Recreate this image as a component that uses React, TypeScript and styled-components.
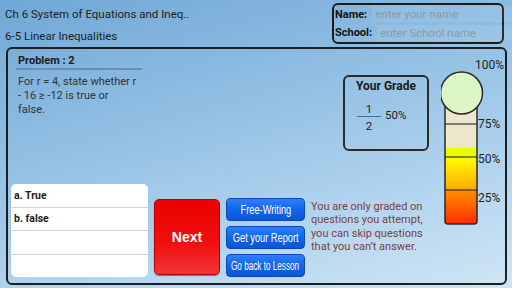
import React from "react";
import styled, { createGlobalStyle } from "styled-components";

const GlobalStyle = createGlobalStyle`
  html, body {
    margin: 0;
    padding: 0;
  }
  body {
    width: 512px;
    height: 288px;
    overflow: hidden;
    font-family: Roboto, "Liberation Sans", sans-serif;
  }
`;

const answers = ["a. True", "b. false", "", ""];
const actions = [
  { label: "Free-Writing", squeeze: 0.77 },
  { label: "Get your Report", squeeze: 0.77 },
  { label: "Go back to Lesson", squeeze: 0.68 },
];

const Thermometer = () => (
  <svg width="64" height="180" viewBox="0 0 64 180">
    <defs>
      <linearGradient id="mid" x1="0" y1="0" x2="0" y2="1">
        <stop offset="0" stopColor="#ffff00" />
        <stop offset="1" stopColor="#ffa800" />
      </linearGradient>
      <linearGradient id="low" x1="0" y1="0" x2="0" y2="1">
        <stop offset="0" stopColor="#ff9000" />
        <stop offset="1" stopColor="#ff2e00" />
      </linearGradient>
    </defs>
    <rect x="4" y="50" width="32" height="49" fill="#ede6ca" />
    <rect x="4" y="99" width="32" height="9" fill="#e8ff00" />
    <rect x="4" y="108" width="32" height="33" fill="url(#mid)" />
    <path d="M4 141 H36 V172 Q36 175 33 175 H7 Q4 175 4 172 Z" fill="url(#low)" />
    <line x1="4" y1="75" x2="36" y2="75" stroke="#333" strokeWidth="1.2" />
    <line x1="4" y1="108" x2="36" y2="108" stroke="#333" strokeWidth="1.2" />
    <line x1="4" y1="141" x2="36" y2="141" stroke="#333" strokeWidth="1.2" />
    <path d="M4 56 V172 Q4 175 7 175 H33 Q36 175 36 172 V56" fill="none" stroke="#2a2a2a" strokeWidth="1.5" />
    <circle cx="20.5" cy="44" r="21" fill="#dcf6c6" stroke="#2a2a2a" strokeWidth="1.5" />
    <g fontFamily="Roboto, sans-serif" fontSize="12" fill="#222">
      <text x="34" y="20">100%</text>
      <text x="37" y="79">75%</text>
      <text x="37" y="114">50%</text>
      <text x="37" y="153">25%</text>
    </g>
  </svg>
);

const App = () => {
  return (
    <Screen>
      <GlobalStyle />
      <Header>
        <Titles>
          <Title>Ch 6 System of Equations and Ineq..</Title>
          <Title>6-5 Linear Inequalities</Title>
        </Titles>
        <NameCard>
          <Field>
            <FieldLabel>Name:</FieldLabel>
            <FieldInput placeholder="enter your name" />
          </Field>
          <Field>
            <FieldLabel>School:</FieldLabel>
            <FieldInput placeholder="enter School name" />
          </Field>
        </NameCard>
      </Header>

      <Panel>
        <Main>
          <TopRow>
            <Problem>
              <ProblemLabel>Problem : 2</ProblemLabel>
              <Rule />
              <ProblemText>
                For r = 4, state whether r
                <br />- 16 ≥ -12 is true or
                <br />
                false.
              </ProblemText>
            </Problem>
            <GradeCard>
              <GradeTitle>Your Grade</GradeTitle>
              <GradeRow>
                <Fraction>
                  <Num>1</Num>
                  <Den>2</Den>
                </Fraction>
                <Percent>50%</Percent>
              </GradeRow>
            </GradeCard>
          </TopRow>

          <BottomRow>
            <AnswerList>
              {answers.map((a, i) => (
                <AnswerRow key={i} last={i === answers.length - 1}>
                  {a}
                </AnswerRow>
              ))}
            </AnswerList>
            <NextButton>Next</NextButton>
            <ButtonStack>
              {actions.map((a) => (
                <BlueButton key={a.label}>
                  <ButtonText squeeze={a.squeeze}>{a.label}</ButtonText>
                </BlueButton>
              ))}
            </ButtonStack>
            <Note>
              You are only graded on
              <br />
              questions you attempt,
              <br />
              you can skip questions
              <br />
              that you can’t answer.
            </Note>
          </BottomRow>
        </Main>
        <ThermoColumn>
          <Thermometer />
        </ThermoColumn>
      </Panel>
    </Screen>
  );
};

export default App;

const Screen = styled.div`
  width: 512px;
  height: 288px;
  display: flex;
  flex-direction: column;
  background: linear-gradient(165deg, #70a7d6 0%, #93c0e4 40%, #b6d7ef 75%, #cfe5f4 100%);
  color: #222;
  overflow: hidden;
`;

const Header = styled.div`
  height: 47px;
  display: flex;
  justify-content: space-between;
  flex-shrink: 0;
`;

const Titles = styled.div`
  padding: 3px 0 0 5px;
`;

const Title = styled.div`
  font-size: 11.5px;
  line-height: 22px;
  color: #1e1e1e;
`;

const NameCard = styled.div`
  margin: 3px 8px 0 0;
  width: 172px;
  height: 41px;
  box-sizing: border-box;
  border: 2px solid #1c1c1c;
  border-radius: 6px;
  padding: 0 4px 0 1px;
  display: grid;
  grid-template-rows: 1fr 1fr;
`;

const Field = styled.div`
  display: flex;
  align-items: center;
  gap: 5px;
`;

const FieldLabel = styled.span`
  font-size: 11px;
  font-weight: bold;
  color: #111;
`;

const FieldInput = styled.input`
  flex: 1;
  min-width: 0;
  height: 16px;
  border: none;
  outline: none;
  padding: 0 3px;
  background: rgba(255, 255, 255, 0.08);
  font-family: Roboto, sans-serif;
  font-size: 11.5px;
  color: #333;

  &::placeholder {
    color: #8a9aa8;
  }
`;

const Panel = styled.div`
  flex: 1;
  margin: 0 5px 3px 6px;
  border: 2px solid #1e1e1e;
  border-radius: 6px;
  display: flex;
`;

const Main = styled.div`
  width: 433px;
  display: flex;
  flex-direction: column;
`;

const TopRow = styled.div`
  height: 135px;
  display: flex;
  justify-content: space-between;
  flex-shrink: 0;
`;

const Problem = styled.div`
  width: 126px;
  margin-left: 8px;
  padding-top: 5px;
`;

const ProblemLabel = styled.div`
  font-size: 11px;
  font-weight: bold;
  line-height: 14px;
  padding-left: 2px;
  color: #1a1a1a;
`;

const Rule = styled.div`
  height: 2px;
  background: #6a8db6;
`;

const ProblemText = styled.div`
  margin-top: 5px;
  padding-left: 2px;
  font-size: 11px;
  line-height: 14px;
  color: #333;
`;

const GradeCard = styled.div`
  margin: 26px 12px 0 0;
  width: 86px;
  height: 76px;
  box-sizing: border-box;
  border: 2px solid #2a2a2a;
  border-radius: 6px;
  display: flex;
  flex-direction: column;
`;

const GradeTitle = styled.div`
  padding-top: 1px;
  font-size: 12px;
  font-weight: bold;
  line-height: 16px;
  text-align: center;
  color: #1a1a1a;
`;

const GradeRow = styled.div`
  margin-top: 8px;
  padding-left: 12px;
  display: flex;
  align-items: center;
  gap: 4px;
`;

const Fraction = styled.div`
  width: 24px;
  display: flex;
  flex-direction: column;
  align-items: center;
  font-size: 11.5px;
`;

const Num = styled.div`
  width: 100%;
  text-align: center;
  line-height: 14px;
  border-bottom: 1.5px solid #3d6ea6;
`;

const Den = styled.div`
  margin-top: 2px;
  line-height: 14px;
`;

const Percent = styled.div`
  margin-bottom: 5px;
  font-size: 11.5px;
`;

const BottomRow = styled.div`
  flex: 1;
  display: flex;
  align-items: flex-end;
  gap: 6px;
  padding: 0 0 6px 3px;
`;

const AnswerList = styled.div`
  width: 137px;
  height: 93px;
  background: #fff;
  border-radius: 5px;
  display: flex;
  flex-direction: column;
  overflow: hidden;
`;

const AnswerRow = styled.div<{ last?: boolean }>`
  flex: 1;
  display: flex;
  align-items: center;
  padding-left: 3px;
  font-size: 10.5px;
  font-weight: bold;
  color: #222;
  border-bottom: ${(p) => (p.last ? "none" : "1px solid #d2d2d2")};
`;

const NextButton = styled.div`
  width: 66px;
  height: 76px;
  margin-bottom: 2px;
  box-sizing: border-box;
  border: 1px solid #b80000;
  border-radius: 5px;
  background: linear-gradient(180deg, #ec0000 0%, #f01010 60%, #f03434 100%);
  box-shadow: 0 1px 1px rgba(0, 0, 0, 0.45);
  display: flex;
  align-items: center;
  justify-content: center;
  color: #fff;
  font-size: 14px;
  font-weight: bold;
  font-family: "Liberation Sans", Arial, sans-serif;
`;

const ButtonStack = styled.div`
  width: 79px;
  display: flex;
  flex-direction: column;
  gap: 5px;
`;

const BlueButton = styled.div`
  height: 23px;
  box-sizing: border-box;
  border: 1px solid #0a48b8;
  border-radius: 4px;
  background: linear-gradient(180deg, #2f80f6 0%, #1266e8 50%, #0a56d6 100%);
  display: flex;
  align-items: center;
  justify-content: center;
  overflow: hidden;
`;

const ButtonText = styled.span<{ squeeze: number }>`
  display: inline-block;
  transform: scaleX(${(p) => p.squeeze});
  color: #fff;
  font-family: "Liberation Sans", Arial, sans-serif;
  font-size: 12px;
  white-space: nowrap;
`;

const Note = styled.div`
  align-self: flex-start;
  margin-top: 16px;
  font-size: 11px;
  line-height: 13.4px;
  color: #7a4242;
`;

const ThermoColumn = styled.div`
  flex: 1;
  display: flex;
  align-items: flex-start;
`;
